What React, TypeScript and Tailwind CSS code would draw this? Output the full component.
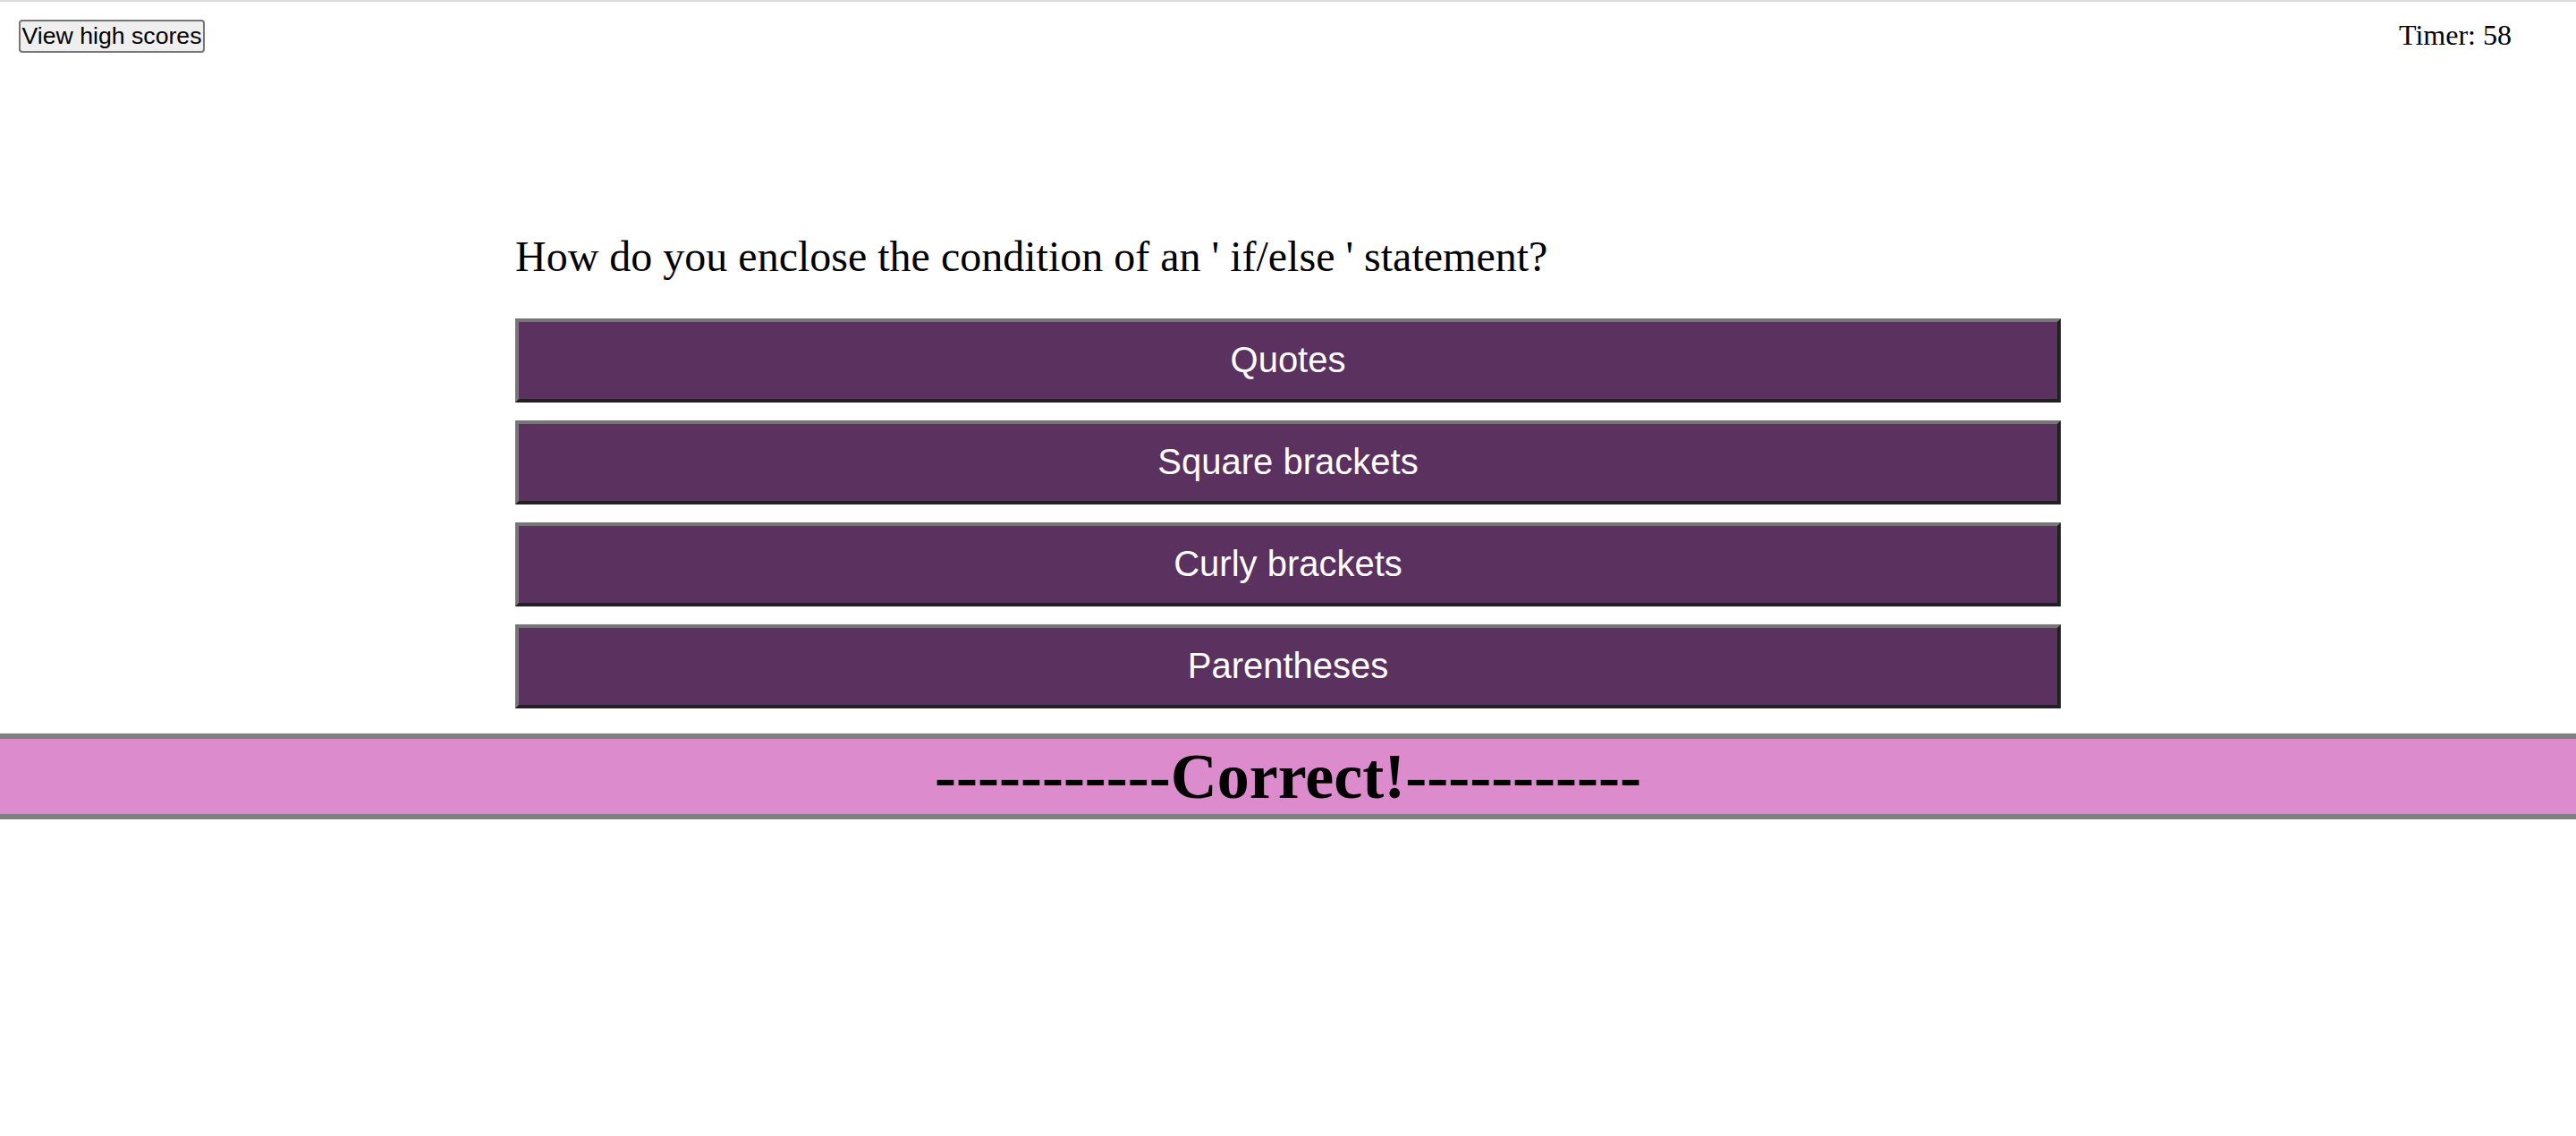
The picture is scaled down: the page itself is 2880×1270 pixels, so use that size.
import React from "react";

const answers = ["Quotes", "Square brackets", "Curly brackets", "Parentheses"];

export default function App() {
  return (
    <div className="min-h-[1270px] w-full bg-white border-t-2 border-[#dcdcdc] text-black">
      <header className="flex items-start justify-between pl-[21px] pr-[72px] pt-[20px]">
        <button
          type="button"
          className="flex h-[37px] w-[208px] items-center justify-center rounded-[4px] border-2 border-[#767676] bg-[#efefef] text-[26.67px] leading-[31px] text-black font-['Liberation_Sans',Arial,sans-serif]"
        >
          View high scores
        </button>
        <div className="-mt-px text-[32px] leading-[36px] font-['Liberation_Serif','Times_New_Roman',serif]">
          Timer: 58
        </div>
      </header>

      <main className="mx-auto mt-[201px] w-[1728px]">
        <h2 className="text-[48px] leading-[54px] font-normal font-['Liberation_Serif','Times_New_Roman',serif]">
          How do you enclose the condition of an ' if/else ' statement?
        </h2>
        <div className="mt-[42px] flex flex-col gap-[20px]">
          {answers.map((a) => (
            <button
              key={a}
              type="button"
              className="flex h-[94px] w-full items-center justify-center border-4 border-t-[#767676] border-l-[#767676] border-r-[#212121] border-b-[#212121] bg-[#5b3160] pb-[2px] text-[40px] leading-[45px] text-white font-['Liberation_Sans',Arial,sans-serif]"
            >
              {a}
            </button>
          ))}
        </div>
      </main>

      <div className="mt-[28px] flex h-[96px] w-full items-center justify-center border-y-[6px] border-[#808080] bg-[#dc8ccc]">
        <h1 className="text-[72px] leading-[80px] font-bold font-['Liberation_Serif','Times_New_Roman',serif]">
          -----------Correct!-----------
        </h1>
      </div>
    </div>
  );
}
